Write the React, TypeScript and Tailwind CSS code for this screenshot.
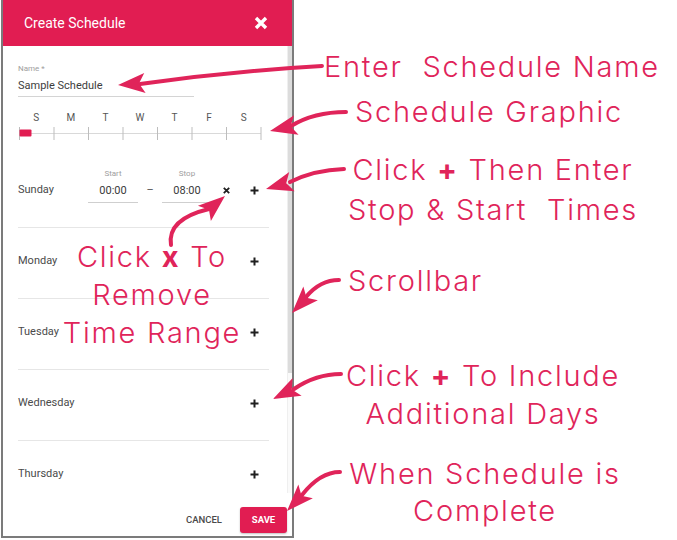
import React from 'react'

// arrowhead polygon: tip, direction taken from a point behind it
function head(tx: number, ty: number, fx: number, fy: number, len = 27, hw = 10) {
  const dx = tx - fx
  const dy = ty - fy
  const d = Math.hypot(dx, dy)
  const ux = dx / d
  const uy = dy / d
  const px = -uy
  const py = ux
  const bx = tx - ux * len
  const by = ty - uy * len
  const nx = tx - ux * len * 0.78
  const ny = ty - uy * len * 0.78
  return `${tx},${ty} ${bx + px * hw},${by + py * hw} ${nx},${ny} ${bx - px * hw},${by - py * hw}`
}

const arrows = [
  { d: 'M322,66 Q232,71 140,84', tip: [118, 85], from: [146, 83] },
  { d: 'M346,112 Q314,112 291,126', tip: [270, 131], from: [296, 125] },
  { d: 'M344,169 Q314,170 290,182', tip: [266, 189], from: [294, 181] },
  { d: 'M339,280 Q320,280 306,297', tip: [292, 313], from: [311, 293] },
  { d: 'M341,374 Q316,374 294,389', tip: [273, 399], from: [299, 386] },
  { d: 'M340,472 Q320,472 302,495', tip: [287, 511], from: [306, 491] },
  { d: 'M171,245 Q167,219 209,209', tip: [225, 196], from: [205, 213] },
]

const days = ['Sunday', 'Monday', 'Tuesday', 'Wednesday', 'Thursday']
const letters = ['S', 'M', 'T', 'W', 'T', 'F', 'S']

function Plus() {
  return (
    <svg width="9" height="9" viewBox="0 0 9 9" className="shrink-0">
      <path d="M4.5 0.5V8.5M0.5 4.5H8.5" stroke="#1f1f1f" strokeWidth="2" />
    </svg>
  )
}

function TimeField({ label, value }: { label: string; value: string }) {
  return (
    <div className="w-[50px] -mt-[8px] flex flex-col items-center border-b border-[#cfcfcf] pb-[4px]">
      <span className="text-[8px] leading-[10px] text-[#9e9e9e]">{label}</span>
      <span className="mt-[5px] text-[11px] leading-[14px] text-[#3a3a3a]">{value}</span>
    </div>
  )
}

function Dialog() {
  return (
    <div className="ml-[1px] w-[293px] h-[538px] shrink-0 flex flex-col border-2 border-t-0 border-[#7b7b7b] bg-white font-['Roboto',sans-serif]">
      <div className="h-[46px] shrink-0 bg-[#e11d52] flex items-center justify-between pl-[21px] pr-[24px]">
        <span className="text-[14px] text-white">Create Schedule</span>
        <svg width="14" height="14" viewBox="0 0 14 14">
          <path d="M2 2L12 12M12 2L2 12" stroke="white" strokeWidth="3.4" />
        </svg>
      </div>

      <div className="h-[447px] shrink-0 flex">
        <div className="flex-1 overflow-hidden pl-[15px] pr-[18px] pt-[18px]">
          <div className="w-[176px] border-b border-[#d4d4d4] pb-[4px]">
            <div className="text-[8px] leading-[10px] text-[#9e9e9e]">Name *</div>
            <div className="mt-[5px] text-[11px] leading-[13px] text-[#3d3d3d]">Sample Schedule</div>
          </div>

          <div className="mt-[15px] ml-[1px] w-[242px] grid grid-cols-7 text-[10px] leading-[12px] text-[#555]">
            {letters.map((l, i) => (
              <span key={i} className="text-center">{l}</span>
            ))}
          </div>
          <svg width="245" height="13" className="mt-[3px] block">
            <line x1="1" y1="6.5" x2="243" y2="6.5" stroke="#d9d9d9" strokeWidth="1" />
            {Array.from({ length: 8 }).map((_, i) => (
              <line key={i} x1={1.5 + i * 34.5} y1="0" x2={1.5 + i * 34.5} y2="13" stroke="#bdbdbd" strokeWidth="1" />
            ))}
            <rect x="1.5" y="2.5" width="12" height="7" rx="1" fill="#e11d52" />
          </svg>

          <div className="mt-[17px]">
            {days.map((day, i) => (
              <div key={day} className="h-[71px] flex items-center pb-[4px] border-b border-[#e6e6e6]">
                <span className="w-[70px] shrink-0 text-[11px] text-[#4a4a4a]">{day}</span>
                {i === 0 && (
                  <>
                    <TimeField label="Start" value="00:00" />
                    <span className="w-[24px] text-center text-[11px] text-[#555]">–</span>
                    <TimeField label="Stop" value="08:00" />
                    <svg width="7" height="7" viewBox="0 0 7 7" className="ml-[11px] shrink-0">
                      <path d="M0.8 0.8L6.2 6.2M6.2 0.8L0.8 6.2" stroke="#1f1f1f" strokeWidth="1.8" />
                    </svg>
                  </>
                )}
                <div className="ml-auto mr-[10px]">
                  <Plus />
                </div>
              </div>
            ))}
          </div>
        </div>
        <div className="w-[5px] shrink-0 bg-[#fafafa] border-l border-[#efefef]">
          <div className="h-[327px] bg-[#dcdcdc]" />
        </div>
      </div>

      <div className="flex-1 flex items-start justify-end pt-[14px] pr-[5px]">
        <span className="mt-[7px] mr-[18px] text-[9.5px] leading-[12px] font-medium text-[#4a4a4a]">CANCEL</span>
        <div className="w-[47px] h-[26px] rounded-[3px] bg-[#e11d52] shadow-[0_1px_2px_rgba(0,0,0,0.25)] flex items-center justify-center">
          <span className="text-[9.5px] font-bold text-white">SAVE</span>
        </div>
      </div>
    </div>
  )
}

export default function App() {
  return (
    <div className="relative w-[677px] h-[540px] overflow-hidden bg-white flex">
      <Dialog />

      {/* annotation column */}
      <div className="flex-1 flex flex-col font-['Inter',sans-serif] font-light text-[29px] tracking-[0.06em] text-[#e0245a] whitespace-pre">
        <div className="mt-[47px] ml-[30px] leading-[40px]">Enter  Schedule Name</div>
        <div className="mt-[5px] ml-[61px] leading-[40px]">Schedule Graphic</div>
        <div className="mt-[18px] ml-[39px] w-[320px] text-center leading-[40px]">
          Click <span className="font-bold">+</span> Then Enter
          <br />
          Stop &amp; Start  Times
        </div>
        <div className="mt-[31px] ml-[54px] leading-[40px]">Scrollbar</div>
        <div className="mt-[56px] ml-[39px] w-[300px] text-center leading-[38px]">
          Click <span className="font-bold">+</span> To Include
          <br />
          Additional Days
        </div>
        <div className="mt-[22px] ml-[41px] w-[300px] text-center leading-[37px]">
          When Schedule is
          <br />
          Complete
        </div>
      </div>

      {/* callout over the dialog */}
      <div className="absolute left-[2px] top-[238px] w-[300px] text-center font-['Inter',sans-serif] font-light text-[29px] tracking-[0.06em] leading-[38px] text-[#e0245a]">
        Click <span className="font-bold">x</span> To
        <br />
        Remove
        <br />
        Time Range
      </div>

      <svg className="absolute inset-0 pointer-events-none" width="677" height="540">
        {arrows.map((a, i) => (
          <g key={i}>
            <path d={a.d} fill="none" stroke="#e0245a" strokeWidth="4" strokeLinecap="round" />
            <polygon points={head(a.tip[0], a.tip[1], a.from[0], a.from[1])} fill="#e0245a" />
          </g>
        ))}
      </svg>
    </div>
  )
}
